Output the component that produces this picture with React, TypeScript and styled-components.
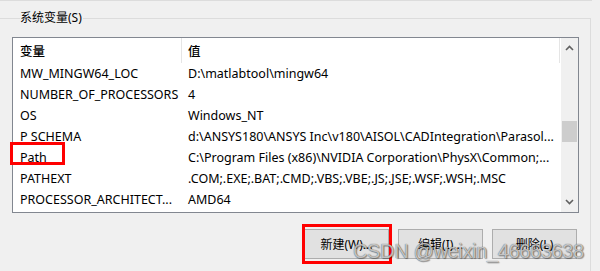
import React from "react";
import styled, { createGlobalStyle } from "styled-components";

const GlobalStyle = createGlobalStyle`
  html, body {
    margin: 0;
    padding: 0;
    background: #f0f0f0;
  }
  body {
    font-family: "Noto Sans", "Noto Sans CJK SC", sans-serif;
    font-size: 12.5px;
    color: #000;
  }
`;

const FONT = `"Noto Sans", "Noto Sans CJK SC", sans-serif`;

const Page = styled.div`
  position: relative;
  width: 600px;
  height: 271px;
  overflow: hidden;
  background: #f0f0f0;
  display: flex;
  flex-direction: column;
`;

const PrevGroupEdge = styled.div`
  height: 1px;
  width: 592px;
  background: #dcdcdc;
  flex: none;
`;

const GroupBox = styled.fieldset`
  margin: 8px 0 0 -1px;
  width: 592px;
  box-sizing: border-box;
  border: 1px solid #dcdcdc;
  padding: 10px 11px 20px 12px;
  min-width: 0;
  flex: none;
`;

const Legend = styled.legend`
  margin-left: 8px;
  padding: 0 1px 0 0;
  font-family: ${FONT};
  font-size: 12px;
  line-height: 18px;
  color: #000;
`;

const ListBox = styled.div`
  position: relative;
  height: 176px;
  box-sizing: border-box;
  border: 1px solid #828790;
  background: #fff;
  display: flex;
`;

const Table = styled.div`
  flex: 1;
  min-width: 0;
  display: flex;
  flex-direction: column;
`;

const HeaderRow = styled.div`
  display: grid;
  grid-template-columns: 169px 378px;
  height: 25px;
`;

const HeaderCell = styled.div<{ $pad: number }>`
  position: relative;
  padding-left: ${(p) => p.$pad}px;
  font-family: "Noto Sans CJK SC", sans-serif;
  font-size: 12.5px;
  font-weight: 500;
  line-height: 25px;
  border-right: 1px solid #e5e5e5;
  white-space: nowrap;
`;

const Row = styled.div`
  display: grid;
  grid-template-columns: 169px 378px;
  height: 21px;
`;

const Cell = styled.div<{ $pad: number }>`
  padding-left: ${(p) => p.$pad}px;
  font-family: ${FONT};
  font-size: 12.5px;
  line-height: 21px;
  white-space: nowrap;
  overflow: hidden;
`;

const Scrollbar = styled.div`
  width: 17px;
  flex: none;
  background: #f0f0f0;
  display: flex;
  flex-direction: column;
`;

const ArrowButton = styled.div`
  height: 20px;
  flex: none;
  display: flex;
  align-items: center;
  justify-content: center;
`;

const Track = styled.div`
  flex: 1;
  display: flex;
  flex-direction: column;
  align-items: center;
`;

const Thumb = styled.div<{ $offset: number; $size: number }>`
  margin-top: ${(p) => p.$offset}px;
  width: 15px;
  height: ${(p) => p.$size}px;
  background: #cdcdcd;
`;

const Mark = styled.div`
  position: absolute;
  left: -3px;
  top: 104px;
  width: 55px;
  height: 23px;
  box-sizing: border-box;
  border: 3px solid #f00;
  pointer-events: none;
`;

const ButtonRow = styled.div`
  display: flex;
  justify-content: flex-end;
  gap: 9px;
  margin-top: 16px;
  margin-right: 2px;
`;

const ButtonWrap = styled.div`
  position: relative;
`;

const Button = styled.button`
  width: 85px;
  height: 30px;
  box-sizing: border-box;
  border: 1px solid #adadad;
  background: #e1e1e1;
  font-family: ${FONT};
  font-size: 12px;
  color: #000;
  padding: 0;
  display: flex;
  align-items: center;
  justify-content: center;
`;

const ButtonMark = styled.div`
  position: absolute;
  left: -2px;
  top: -5px;
  right: -3px;
  bottom: -5px;
  border: 3px solid #f00;
  pointer-events: none;
`;

const Watermark = styled.div`
  position: absolute;
  left: 353px;
  top: 239px;
  font-family: "Liberation Sans", Arial, sans-serif;
  font-size: 20px;
  letter-spacing: -0.35px;
  line-height: 24px;
  color: rgba(235, 235, 235, 0.75);
  text-shadow: 0 0 1px rgba(0, 0, 0, 0.7), 1px 1px 1px rgba(0, 0, 0, 0.35);
  white-space: nowrap;
  pointer-events: none;
`;

const Chevron = ({ up }: { up?: boolean }) => (
  <svg width="9" height="6" viewBox="0 0 9 6">
    <path
      d={up ? "M1 5 L4.5 1.5 L8 5" : "M1 1 L4.5 4.5 L8 1"}
      fill="none"
      stroke="#606060"
      strokeWidth="1.6"
    />
  </svg>
);

const rows: [string, string][] = [
  ["MW_MINGW64_LOC", "D:\\matlabtool\\mingw64"],
  ["NUMBER_OF_PROCESSORS", "4"],
  ["OS", "Windows_NT"],
  ["P SCHEMA", "d:\\ANSYS180\\ANSYS Inc\\v180\\AISOL\\CADIntegration\\Parasol..."],
  ["Path", "C:\\Program Files (x86)\\NVIDIA Corporation\\PhysX\\Common;..."],
  ["PATHEXT", ".COM;.EXE;.BAT;.CMD;.VBS;.VBE;.JS;.JSE;.WSF;.WSH;.MSC"],
  ["PROCESSOR_ARCHITECT...", "AMD64"],
];

export default function App() {
  return (
    <>
      <GlobalStyle />
      <Page>
        <PrevGroupEdge />
        <GroupBox>
          <Legend>系统变量(S)</Legend>
          <ListBox>
            <Table>
              <HeaderRow>
                <HeaderCell $pad={7}>变量</HeaderCell>
                <HeaderCell $pad={6}>值</HeaderCell>
              </HeaderRow>
              {rows.map(([name, value]) => (
                <Row key={name}>
                  <Cell $pad={7}>{name}</Cell>
                  <Cell $pad={6}>{value}</Cell>
                </Row>
              ))}
            </Table>
            <Scrollbar>
              <ArrowButton>
                <Chevron up />
              </ArrowButton>
              <Track>
                <Thumb $offset={63} $size={21} />
              </Track>
              <ArrowButton>
                <Chevron />
              </ArrowButton>
            </Scrollbar>
            <Mark />
          </ListBox>
          <ButtonRow>
            <ButtonWrap>
              <Button>新建(W)...</Button>
              <ButtonMark />
            </ButtonWrap>
            <ButtonWrap>
              <Button>编辑(I)...</Button>
            </ButtonWrap>
            <ButtonWrap>
              <Button>删除(L)</Button>
            </ButtonWrap>
          </ButtonRow>
        </GroupBox>
        <Watermark>CSDN @weixin_46663638</Watermark>
      </Page>
    </>
  );
}
